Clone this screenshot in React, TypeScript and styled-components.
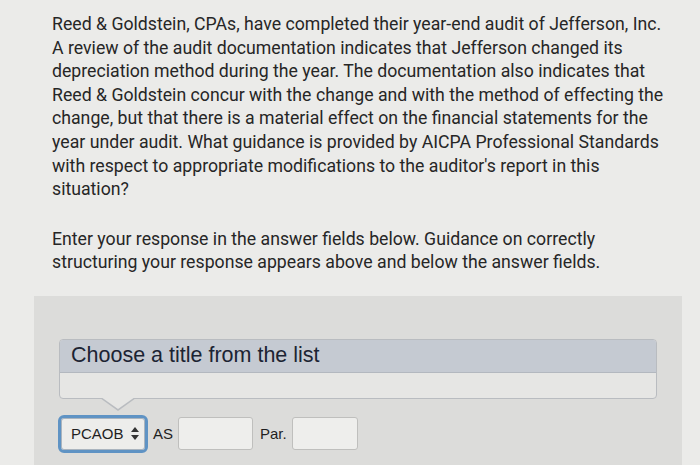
import React from 'react'
import styled, { createGlobalStyle } from 'styled-components'

const GlobalStyle = createGlobalStyle`
  html, body {
    margin: 0;
    padding: 0;
    background: #ebebe9;
  }
`

const Page = styled.div`
  width: 700px;
  height: 465px;
  overflow: hidden;
  box-sizing: border-box;
  padding: 13px 0 0 52px;
  font-family: Roboto, "Liberation Sans", sans-serif;
  color: #262626;
`

const Para = styled.p`
  margin: 0;
  font-size: 17.7px;
  line-height: 23.6px;
  white-space: nowrap;
  & + & {
    margin-top: 26px;
  }
`

const Line = styled.span`
  display: block;
`

const Panel = styled.div`
  margin: 21px 0 0 -18px;
  width: 648px;
  height: 200px;
  box-sizing: border-box;
  padding: 43px 25px 0 25px;
  background: #dcdcda;
`

const TitleBox = styled.div`
  position: relative;
  border: 1px solid #b9bcc0;
  border-radius: 4px;
  background: #e6e6e4;
`

const TitleHead = styled.div`
  height: 32px;
  display: flex;
  align-items: center;
  padding-left: 11px;
  background: #c5cad2;
  border-bottom: 1px solid #b3b8bf;
  border-radius: 3px 3px 0 0;
  font-family: "Liberation Sans", Arial, sans-serif;
  font-size: 21.5px;
  color: #1c2433;
`

const TitleBody = styled.div`
  height: 25px;
`

const Tail = styled.div`
  position: absolute;
  left: 40px;
  bottom: -13px;
  width: 0;
  height: 0;
  border-left: 18px solid transparent;
  border-right: 18px solid transparent;
  border-top: 13px solid #b9bcc0;
  &::after {
    content: '';
    position: absolute;
    left: -17px;
    top: -14px;
    border-left: 17px solid transparent;
    border-right: 17px solid transparent;
    border-top: 12px solid #e6e6e4;
  }
`

const Row = styled.div`
  display: flex;
  align-items: center;
  gap: 5px;
  margin-top: 16px;
  margin-left: -1px;
  font-family: "Liberation Sans", Arial, sans-serif;
  font-size: 15px;
  color: #1f1f1f;
`

const Select = styled.div`
  width: 90px;
  height: 38px;
  box-sizing: border-box;
  display: flex;
  align-items: center;
  justify-content: space-between;
  padding: 0 6px 0 10px;
  border: 3px solid #5f93c4;
  border-radius: 6px;
  background: #ededeb;
  box-shadow: inset 0 0 0 1px #aab4be;
`

const Spinner = styled.svg`
  display: block;
`

const Field = styled.div<{ w: number }>`
  width: ${({ w }) => w}px;
  height: 33px;
  box-sizing: border-box;
  border: 1px solid #bfbfbd;
  border-radius: 3px;
  background: #eeeeec;
  margin-right: 2px;
`

const question = [
  'Reed & Goldstein, CPAs, have completed their year-end audit of Jefferson, Inc.',
  'A review of the audit documentation indicates that Jefferson changed its',
  'depreciation method during the year. The documentation also indicates that',
  'Reed & Goldstein concur with the change and with the method of effecting the',
  'change, but that there is a material effect on the financial statements for the',
  'year under audit. What guidance is provided by AICPA Professional Standards',
  "with respect to appropriate modifications to the auditor's report in this",
  'situation?'
]

const guidance = [
  'Enter your response in the answer fields below. Guidance on correctly',
  'structuring your response appears above and below the answer fields.'
]

export default function App() {
  return (
    <>
      <GlobalStyle />
      <Page>
        <Para>
          {question.map((l, i) => <Line key={i}>{l}</Line>)}
        </Para>
        <Para>
          {guidance.map((l, i) => <Line key={i}>{l}</Line>)}
        </Para>
        <Panel>
          <TitleBox>
            <TitleHead>Choose a title from the list</TitleHead>
            <TitleBody />
            <Tail />
          </TitleBox>
          <Row>
            <Select>
              <span>PCAOB</span>
              <Spinner width='8' height='13' viewBox='0 0 8 13'>
                <path d='M4 0 L8 5 L0 5 Z' fill='#333' />
                <path d='M0 8 L8 8 L4 13 Z' fill='#333' />
              </Spinner>
            </Select>
            <span>AS</span>
            <Field w={75} />
            <span>Par.</span>
            <Field w={66} />
          </Row>
        </Panel>
      </Page>
    </>
  )
}
